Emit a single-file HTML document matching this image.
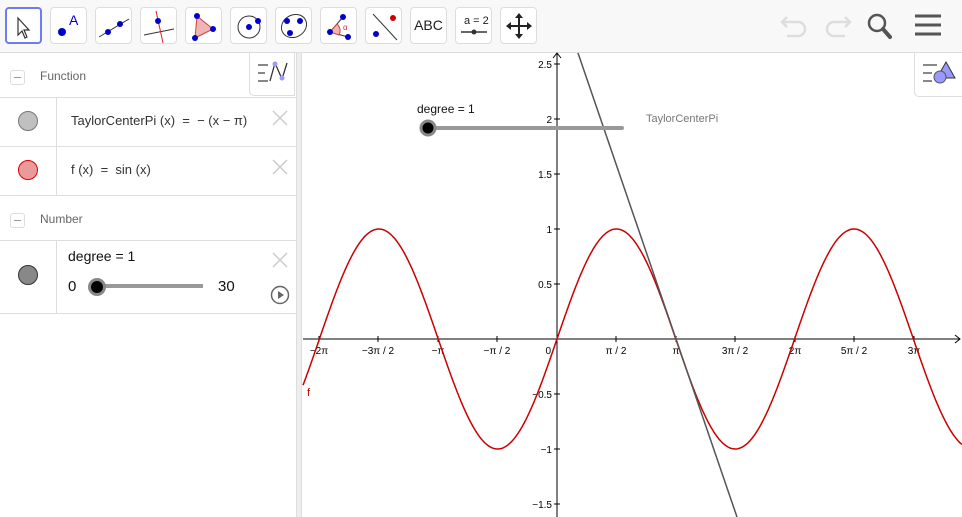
<!DOCTYPE html><html><head><style>
body{margin:0;width:962px;height:517px;overflow:hidden;font-family:"Liberation Sans","DejaVu Sans",sans-serif;background:#fff;position:relative}
.tb{position:absolute;left:0;top:0;width:962px;height:52px;background:#f8f8f8;border-bottom:1px solid #ddd}
.b{position:absolute;top:7px;width:37px;height:37px;background:#fff;border:1px solid #ddd;border-radius:4px;box-sizing:border-box}
.a{position:absolute;font-size:13px;color:#333}
.hl{position:absolute;left:0;width:296px;height:1px;background:#ddd}
.x{position:absolute;left:272px;width:18px;height:18px}
</style></head><body>
<div class="tb">
<div class="b" style="left:5px;border:2px solid #6d7cf2"><svg width="33" height="33"><path d="M11 9 L11 26 L15 22 L18 29 L20 28 L17 21 L22 21 Z" fill="#fff" stroke="#333" stroke-width="1.2"/></svg></div>
<div class="b" style="left:50px"><svg width="35" height="35"><circle cx="11" cy="24" r="4" fill="#00c"/><text x="18" y="17" fill="#00c" font-size="14" font-family="Liberation Sans">A</text></svg></div>
<div class="b" style="left:95px"><svg width="35" height="35"><line x1="3" y1="29" x2="33" y2="11" stroke="#333"/><circle cx="12" cy="24" r="3" fill="#00c"/><circle cx="24" cy="16" r="3" fill="#00c"/></svg></div>
<div class="b" style="left:140px"><svg width="35" height="35"><line x1="3" y1="27" x2="33" y2="21" stroke="#333"/><line x1="15" y1="3" x2="22" y2="35" stroke="#d22"/><circle cx="17" cy="13" r="3" fill="#00c"/></svg></div>
<div class="b" style="left:185px"><svg width="35" height="35"><path d="M11 8 L9 30 L27 21 Z" fill="#f0b4b4" stroke="#c44"/><circle cx="11" cy="8" r="3" fill="#00c"/><circle cx="9" cy="30" r="3" fill="#00c"/><circle cx="27" cy="21" r="3" fill="#00c"/></svg></div>
<div class="b" style="left:230px"><svg width="35" height="35"><circle cx="18" cy="19" r="11" fill="none" stroke="#333"/><circle cx="18" cy="19" r="3" fill="#00c"/><circle cx="27" cy="13" r="3" fill="#00c"/></svg></div>
<div class="b" style="left:275px"><svg width="35" height="35"><ellipse cx="18" cy="18" rx="13" ry="11" fill="none" stroke="#333" transform="rotate(-30 18 18)"/><circle cx="11" cy="13" r="3" fill="#00c"/><circle cx="24" cy="13" r="3" fill="#00c"/><circle cx="14" cy="25" r="3" fill="#00c"/></svg></div>
<div class="b" style="left:320px"><svg width="35" height="35"><path d="M9 24 L22 9 M9 24 L27 29" stroke="#333" fill="none"/><path d="M9 24 L16 16 A9 9 0 0 1 18 27 Z" fill="#f0b4b4" stroke="#c44"/><circle cx="9" cy="24" r="3" fill="#00c"/><circle cx="22" cy="9" r="3" fill="#00c"/><circle cx="27" cy="29" r="3" fill="#00c"/><text x="22" y="22" fill="#c33" font-size="8">α</text></svg></div>
<div class="b" style="left:365px"><svg width="35" height="35"><line x1="7" y1="6" x2="31" y2="32" stroke="#333"/><circle cx="10" cy="26" r="3" fill="#00c"/><circle cx="27" cy="10" r="3" fill="#c00"/></svg></div>
<div class="b" style="left:410px;font-size:14px;text-align:center;line-height:35px;color:#222">ABC</div>
<div class="b" style="left:455px"><svg width="35" height="35"><text x="8" y="16" font-size="11" fill="#222" font-family="Liberation Sans">a = 2</text><line x1="5" y1="24" x2="31" y2="24" stroke="#333" stroke-width="1.5"/><circle cx="18" cy="24" r="2.5" fill="#333"/></svg></div>
<div class="b" style="left:500px"><svg width="35" height="35"><path d="M18 7 V29 M7 18 H29" stroke="#222" stroke-width="2"/><path d="M18 5 L14 10 H22 Z M18 31 L14 26 H22 Z M5 18 L10 14 V22 Z M31 18 L26 14 V22 Z" fill="#222"/></svg></div>
<svg style="position:absolute;left:780px;top:10px" width="180" height="34"><path d="M7 7 L2 12 L7 17 M2 12 H18 A6 6 0 0 1 18 26 H7" fill="none" stroke="#ddd" stroke-width="2.5"/><path d="M65 7 L70 12 L65 17 M70 12 H54 A6 6 0 0 0 54 26 H65" fill="none" stroke="#ddd" stroke-width="2.5"/><circle cx="97" cy="13" r="8" fill="none" stroke="#555" stroke-width="2.5"/><line x1="103" y1="19" x2="110" y2="27" stroke="#555" stroke-width="4" stroke-linecap="round"/><path d="M135 6 H161 M135 15 H161 M135 24 H161" stroke="#555" stroke-width="3"/></svg>
</div>
<!-- algebra -->
<div style="position:absolute;left:296px;top:53px;width:6px;height:464px;background:#eee;border-left:1px solid #ddd;border-right:1px solid #ddd;box-sizing:border-box"></div>
<div style="position:absolute;left:249px;top:53px;width:46px;height:43px;background:#fff;border:1px solid #ddd;border-top:none;border-radius:0 0 0 5px;box-sizing:border-box"><svg width="44" height="40"><path d="M8 12 H18 M8 20 H15 M8 28 H18" stroke="#888" stroke-width="2"/><path d="M20 28 L25 10 L32 26 L37 10" fill="none" stroke="#333" stroke-width="1.3"/><circle cx="25" cy="11" r="2.5" fill="#99f"/><circle cx="32" cy="25" r="2.5" fill="#99f"/></svg></div>
<div style="position:absolute;left:10px;top:70px;width:13px;height:13px;border:1px solid #ddd;border-radius:3px"><div style="margin:6px 3px;height:1px;background:#999"></div></div>
<div class="a" style="left:40px;top:69px;color:#666;font-size:12px">Function</div>
<div class="hl" style="top:97px"></div><div class="hl" style="top:146px"></div><div class="hl" style="top:195px"></div><div class="hl" style="top:240px"></div><div class="hl" style="top:313px"></div>
<div style="position:absolute;left:56px;top:97px;width:1px;height:98px;background:#ddd"></div>
<div style="position:absolute;left:56px;top:240px;width:1px;height:73px;background:#ddd"></div>
<div style="position:absolute;left:18px;top:111px;width:18px;height:18px;border-radius:50%;background:#c0c0c0;border:1px solid #777"></div>
<div class="a" style="left:71px;top:113px">TaylorCenterPi (x) &nbsp;= &nbsp;− (x − π)</div>
<div style="position:absolute;left:18px;top:160px;width:18px;height:18px;border-radius:50%;background:#ea9a9a;border:1px solid #d00"></div>
<div class="a" style="left:71px;top:162px">f (x) &nbsp;= &nbsp;sin (x)</div>
<div style="position:absolute;left:10px;top:213px;width:13px;height:13px;border:1px solid #ddd;border-radius:3px"><div style="margin:6px 3px;height:1px;background:#999"></div></div>
<div class="a" style="left:40px;top:212px;color:#666;font-size:12px">Number</div>
<div style="position:absolute;left:18px;top:265px;width:18px;height:18px;border-radius:50%;background:#888;border:1px solid #333"></div>
<div class="a" style="left:68px;top:248px;font-size:14px;color:#111">degree = 1</div>
<div class="a" style="left:68px;top:278px;font-size:15px;color:#111">0</div>
<div style="position:absolute;left:96px;top:284px;width:107px;height:4px;background:#999"></div>
<div style="position:absolute;left:88px;top:278px;width:12px;height:12px;border-radius:50%;background:#000;border:3px solid #888"></div>
<div class="a" style="left:218px;top:278px;font-size:15px;color:#111">30</div>
<svg style="position:absolute;left:270px;top:108px" width="22" height="200"><path d="M3 3 L17 17 M17 3 L3 17" stroke="#ccc" stroke-width="1.5"/><path d="M3 52 L17 66 M17 52 L3 66" stroke="#ccc" stroke-width="1.5"/><path d="M3 145 L17 159 M17 145 L3 159" stroke="#ccc" stroke-width="1.5"/><circle cx="10" cy="187" r="8.5" fill="none" stroke="#666" stroke-width="1.5"/><path d="M8 183 L14 187 L8 191 Z" fill="#666"/></svg>
<!-- graphics -->
<svg id="g" style="position:absolute;left:0;top:0" width="962" height="517" font-family="Liberation Sans" font-size="10">
<line x1="303" y1="339" x2="960" y2="339" stroke="#000"/><path d="M955 335 L960 339 L955 343" fill="none" stroke="#000"/>
<line x1="557" y1="53" x2="557" y2="517" stroke="#000"/><path d="M553 58 L557 53 L561 58" fill="none" stroke="#000"/>
<g id="t"></g>
<path id="s" fill="none" stroke="#c00" stroke-width="1.5"/>
<line x1="578" y1="53" x2="737" y2="517" stroke="#555" stroke-width="1.5"/>
<text x="307" y="396" fill="#c00" font-size="11">f</text>
<text x="417" y="113" font-size="12" fill="#111">degree = 1</text>
<line x1="428" y1="128" x2="622" y2="128" stroke="#999" stroke-width="4" stroke-linecap="round"/>
<circle cx="428" cy="128" r="7" fill="#000" stroke="#888" stroke-width="3"/>
<text x="646" y="122" font-size="11" fill="#777">TaylorCenterPi</text>
</svg>
<div style="position:absolute;left:914px;top:53px;width:48px;height:43px;background:#fff;border:1px solid #ddd;border-top:none;border-right:none;border-radius:0 0 0 5px"><svg width="44" height="40"><path d="M8 12 H22 M8 20 H17 M8 28 H17" stroke="#888" stroke-width="2"/><path d="M31 9 L40 25 L22 25 Z" fill="#99f" stroke="#333"/><circle cx="25" cy="24" r="6" fill="#99f" stroke="#555"/></svg></div>
<script>
var s="",x0=557,y0=339,ux=118.8/Math.PI,uy=110;
for(var p=303;p<=962;p++){var v=(p-x0)/ux;s+=(p==303?"M":"L")+p+" "+(y0-uy*Math.sin(v)).toFixed(1);}
document.getElementById("s").setAttribute("d",s);
var t="",L=[["−2π",319],["−3π / 2",378],["−π",438],["−π / 2",497],["π / 2",616],["π",676],["3π / 2",735],["2π",795],["5π / 2",854],["3π",914]];
L.forEach(function(a){t+='<line x1="'+a[1]+'" y1="336" x2="'+a[1]+'" y2="342" stroke="#000"/><text x="'+a[1]+'" y="354" text-anchor="middle">'+a[0]+'</text>';});
t+='<text x="551" y="354" text-anchor="end">0</text>';
[["2.5",64],["2",119],["1.5",174],["1",229],["0.5",284],["−0.5",394],["−1",449],["−1.5",504]].forEach(function(a){t+='<line x1="554" y1="'+a[1]+'" x2="560" y2="'+a[1]+'" stroke="#000"/><text x="552" y="'+(a[1]+4)+'" text-anchor="end">'+a[0]+'</text>';});
document.getElementById("t").innerHTML=t;
</script>
</body></html>
